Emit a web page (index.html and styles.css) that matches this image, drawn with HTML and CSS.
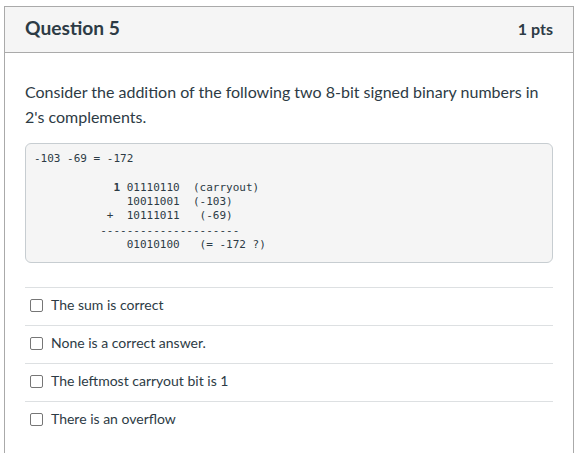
FILE: index.html
```html
<!DOCTYPE html>
<html>
<head>
<meta charset="utf-8">
<link rel="stylesheet" href="styles.css">
</head>
<body>
<div class="question">
  <div class="header">
    <span class="name">Question 5</span>
    <span class="points">1 pts</span>
  </div>
  <div class="content">
    <p class="text">Consider the addition of the following two 8-bit signed binary numbers in 2's complements.</p>
<pre class="code">-103 -69 = -172

            <b>1</b> 01110110  (carryout)
              10011001  (-103)
           +  10111011   (-69)
          ---------------------
              01010100   (= -172 ?)</pre>
    <div class="answers">
      <label class="answer"><span class="box"></span><span>The sum is correct</span></label>
      <label class="answer"><span class="box"></span><span>None is a correct answer.</span></label>
      <label class="answer"><span class="box"></span><span>The leftmost carryout bit is 1</span></label>
      <label class="answer"><span class="box"></span><span>There is an overflow</span></label>
    </div>
  </div>
</div>
</body>
</html>
```
FILE: styles.css
```css
html, body {
  margin: 0;
  padding: 0;
  background: #fff;
}
body {
  font-family: Lato, "Open Sans", sans-serif;
  color: #2d3b45;
}
.question {
  margin: 6px 0 0 4px;
  width: 570px;
  box-sizing: border-box;
  border: 1px solid #aaaaaa;
  border-bottom: none;
  height: 460px;
}
.header {
  display: flex;
  justify-content: space-between;
  align-items: center;
  height: 45px;
  padding: 0 20px;
  background: #f5f5f5;
  border-bottom: 1px solid #aaaaaa;
  font-weight: bold;
}
.name {
  font-size: 19.2px;
  padding-bottom: 4px;
}
.points {
  font-size: 16px;
  padding-bottom: 3px;
}
.content {
  padding: 26px 20px 0 20px;
}
.text {
  margin: 0;
  font-size: 16px;
  line-height: 25px;
}
.code {
  margin: 14px 0 0 0;
  padding: 8px 8px 10px 8px;
  background: #f5f5f5;
  border: 1px solid #c7cdd1;
  border-radius: 6px;
  font-family: "DejaVu Sans Mono", "Liberation Mono", monospace;
  font-size: 11px;
  line-height: 14.33px;
  color: #2d3b45;
}
.code b {
  font-weight: bold;
}
.answers {
  margin-top: 24px;
}
.answer {
  display: flex;
  align-items: center;
  gap: 8px;
  height: 32px;
  padding-bottom: 5px;
  border-top: 1px solid #dde0e2;
  padding-left: 5px;
  font-size: 14px;
}
.box {
  width: 13px;
  height: 13px;
  box-sizing: border-box;
  border: 1px solid #767676;
  border-radius: 2px;
  background: #fff;
  margin-top: 2px;
}
```
